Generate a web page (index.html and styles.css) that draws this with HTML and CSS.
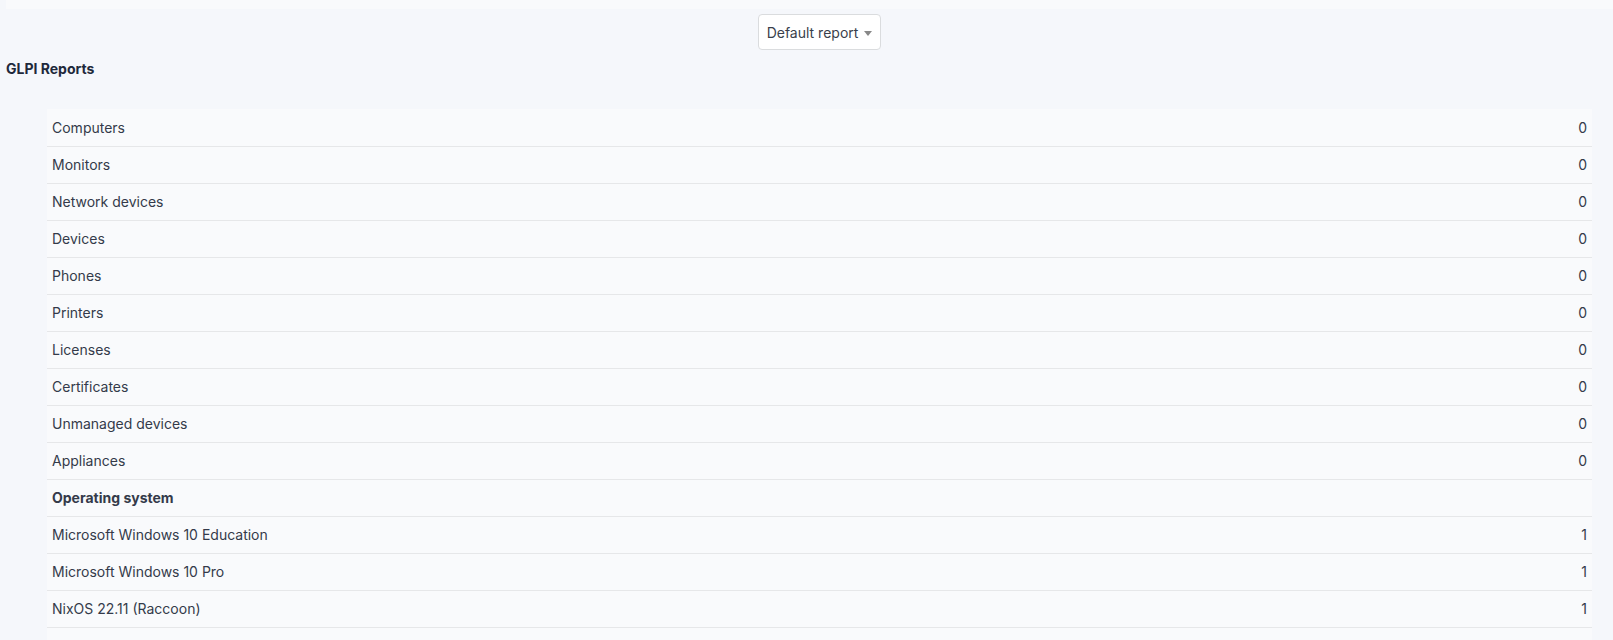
FILE: index.html
```html
<!DOCTYPE html>
<html>
<head>
<meta charset="utf-8">
<link rel="stylesheet" href="styles.css">
</head>
<body>
<div class="topstrip"></div>
<div class="selector-row">
  <div class="select">
    <span>Default report</span>
    <span class="caret"></span>
  </div>
</div>
<h2 class="title">GLPI Reports</h2>
<div class="table-wrap">
  <table class="report">
    <tr><td>Computers</td><td class="num">0</td></tr>
    <tr><td>Monitors</td><td class="num">0</td></tr>
    <tr><td>Network devices</td><td class="num">0</td></tr>
    <tr><td>Devices</td><td class="num">0</td></tr>
    <tr><td>Phones</td><td class="num">0</td></tr>
    <tr><td>Printers</td><td class="num">0</td></tr>
    <tr><td>Licenses</td><td class="num">0</td></tr>
    <tr><td>Certificates</td><td class="num">0</td></tr>
    <tr><td>Unmanaged devices</td><td class="num">0</td></tr>
    <tr><td>Appliances</td><td class="num">0</td></tr>
    <tr class="head"><td>Operating system</td><td class="num"></td></tr>
    <tr><td>Microsoft Windows 10 Education</td><td class="num">1</td></tr>
    <tr><td>Microsoft Windows 10 Pro</td><td class="num">1</td></tr>
    <tr><td>NixOS 22.11 (Raccoon)</td><td class="num">1</td></tr>
    <tr><td>&nbsp;</td><td class="num"></td></tr>
  </table>
</div>
</body>
</html>
```
FILE: styles.css
```css
html, body {
  margin: 0;
  padding: 0;
  background: #f5f7fb;
  font-family: Inter, "Noto Sans", sans-serif;
  font-size: 14px;
  color: #1e293b;
}
.topstrip {
  margin-left: 6px;
  height: 9px;
  background: #f9fafc;
}
.selector-row {
  display: flex;
  justify-content: center;
  padding-top: 5px;
  padding-left: 26px;
}
.select {
  display: flex;
  align-items: center;
  gap: 6px;
  height: 36px;
  box-sizing: border-box;
  padding: 0 8px;
  background: #ffffff;
  border: 1px solid #dadcde;
  border-radius: 4px;
  color: #3a3f4b;
  font-size: 14px;
}
.caret {
  width: 0;
  height: 0;
  border-left: 4px solid transparent;
  border-right: 4px solid transparent;
  border-top: 5px solid #888;
  margin-top: 2px;
}
.title {
  margin: 0;
  padding: 9px 0 0 6px;
  font-size: 14px;
  font-weight: 700;
  color: #1e293b;
  line-height: 20px;
}
.table-wrap {
  padding: 30px 21px 0 47px;
}
.report {
  width: 100%;
  border-collapse: collapse;
  background: #f9fafc;
}
.report td {
  height: 37px;
  padding: 0 5px;
  border-bottom: 1px solid #e6e7e9;
  color: #343a4a;
  font-size: 14px;
  box-sizing: border-box;
}
.report td.num {
  text-align: right;
}
.report tr.head td {
  font-weight: 700;
}
```
